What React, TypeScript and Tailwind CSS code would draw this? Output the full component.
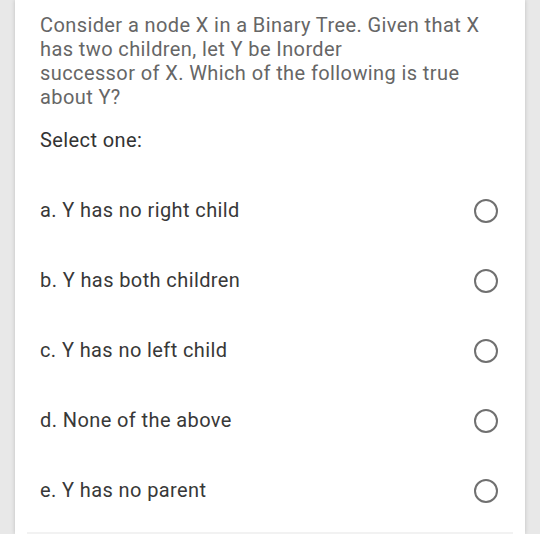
import React from "react";

const options = [
  "a. Y has no right child",
  "b. Y has both children",
  "c. Y has no left child",
  "d. None of the above",
  "e. Y has no parent",
];

export default function App() {
  return (
    <div
      className="w-[540px] h-[534px] overflow-hidden bg-[#e8e8e8] px-[15px]"
      style={{ fontFamily: "Roboto, 'Noto Sans', sans-serif" }}
    >
      <div className="h-full bg-white shadow-[0_0_4px_rgba(0,0,0,0.18)] pt-[13px] px-[25px] tracking-[0.4px]">
        <div className="text-[20px] leading-[24px] text-[#666666]">
          Consider a node X in a Binary Tree. Given that X
          <br />
          has two children, let Y be Inorder
          <br />
          successor of X. Which of the following is true
          <br />
          about Y?
        </div>
        <div className="mt-[19px] text-[20px] leading-[24px] text-[#333333]">
          Select one:
        </div>
        <div className="mt-[23px] flex flex-col">
          {options.map((o) => (
            <div key={o} className="h-[70px] flex items-center justify-between">
              <span className="text-[20px] leading-[24px] text-[#383838]">{o}</span>
              <span className="mr-[2px] mt-[2px] w-[24px] h-[24px] rounded-full border-[2.5px] border-[#707070]" />
            </div>
          ))}
        </div>
        <div className="mt-[7px] -mx-[13px] h-[2px] bg-[#f2f2f2]" />
      </div>
    </div>
  );
}
